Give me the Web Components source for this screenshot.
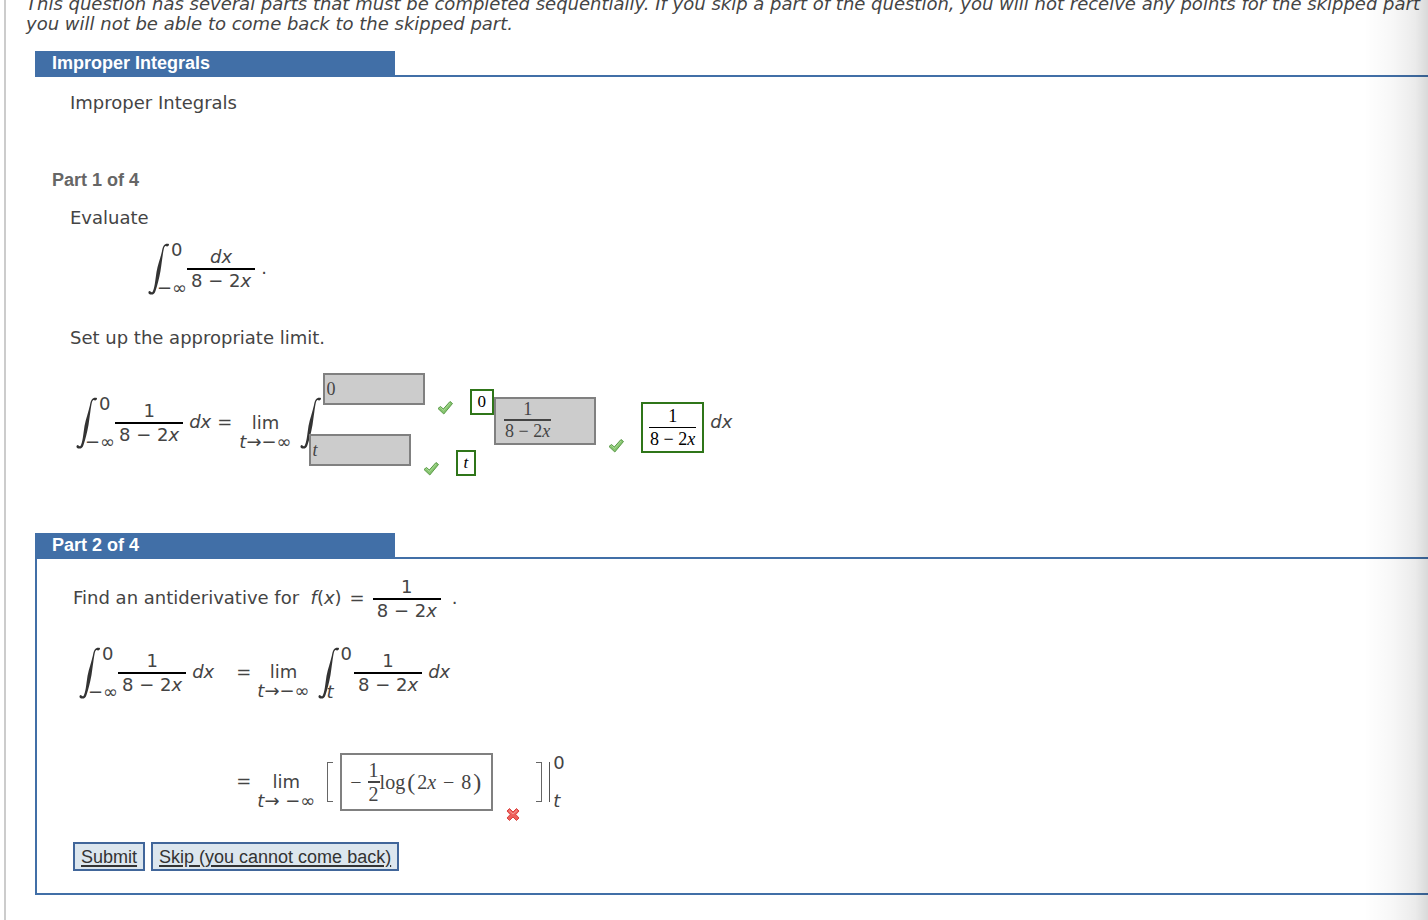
<!DOCTYPE html>
<html lang="en">
<head>
<meta charset="utf-8">
<title>Improper Integrals</title>
<style>
  body { margin: 0; background: #fff; }
</style>
</head>
<body>
<question-page></question-page>

<script>
class MathFrac extends HTMLElement {
  constructor() {
    super();
    this.attachShadow({ mode: 'open' }).innerHTML = `
      <style>
        :host { display: inline-flex; flex-direction: column; text-align: center; white-space: nowrap; line-height: 22px; }
        .num { border-bottom: var(--thick, 2px) solid var(--bar, #000); }
        .num, .den { padding: 0 var(--side, 4px); }
      </style>
      <div class="num"><slot name="num"></slot></div>
      <div class="den"><slot></slot></div>
    `;
  }
}

class MathInt extends HTMLElement {
  constructor() {
    super();
    this.attachShadow({ mode: 'open' }).innerHTML = `
      <style>
        :host { display: inline-flex; align-items: center; line-height: 14px; }
        svg { width: 22px; height: 52px; flex: none; margin-right: 1px; }
        .limits { display: flex; flex-direction: column; justify-content: space-between; gap: 19px; min-height: 52px; }
        .low { margin-left: -14px; }
      </style>
      <svg viewBox="0 0 22 52" aria-hidden="true">
        <path fill="#333" d="M21 1C17 0 15 2 14 8C12.500 15 10 21 8.500 29C7.300 37 6.500 46 4.500 49C3 50 3 48 1.500 48C0 48.500 0 51 2 51.500C5 52 6.500 51 7.500 48C9.500 42 11 36 12.500 28C13.800 20 14.800 10 16 5C17 2.500 18 3 19 3.500C20.500 3.500 21 2.500 21 1Z"/>
      </svg>
      <div class="limits">
        <div><slot name="up"></slot></div>
        <div class="low"><slot></slot></div>
      </div>
    `;
  }
}

class MathLim extends HTMLElement {
  constructor() {
    super();
    this.attachShadow({ mode: 'open' }).innerHTML = `
      <style>
        :host { display: inline-flex; flex-direction: column; align-items: center; line-height: 19px; padding-top: 17px; white-space: nowrap; }
      </style>
      <div>lim</div>
      <div><slot></slot></div>
    `;
  }
}

class MarkIcon extends HTMLElement {
  connectedCallback() {
    const right = `
      <path d="M1 8.500L3.500 6.500L6.300 9L13 1.500L15.500 3.500L6.800 14Z" fill="#86c46f" stroke="#5a9a48" stroke-width="1" stroke-linejoin="round"/>
      <path d="M2.500 8.500L3.700 7.700L6.500 10.500L13 3" fill="none" stroke="#a9dc95"/>`;
    const wrong = `
      <path d="M4.500 1.500L8 5L11.500 1.500L14 4L10.800 7.500L14 11L11.500 13.500L8 10L4.500 13.500L2 11L5.200 7.500L2 4Z" fill="#ee5f5b" stroke="#d84340" stroke-width="1" stroke-linejoin="round"/>
      <path d="M4 3.500L8 7L12 3.500" fill="none" stroke="#f79a95"/>`;
    const ok = this.getAttribute('type') === 'right';
    this.attachShadow({ mode: 'open' }).innerHTML = `
      <style>
        :host { display: inline-block; line-height: 0; }
        svg { width: 16px; height: 15px; }
      </style>
      <svg viewBox="0 0 16 15" role="img" aria-label="${ok ? 'correct' : 'incorrect'}">${ok ? right : wrong}</svg>
    `;
  }
}

// a graded box: the given answer, its mark and the key
class AnswerBox extends HTMLElement {
  connectedCallback() {
    const value = this.getAttribute('value');
    const field = value !== null
      ? `<input class="box" aria-label="${this.getAttribute('label')}" value="${value}" readonly>`
      : `<div class="box math"><slot name="given"></slot></div>`;
    this.attachShadow({ mode: 'open' }).innerHTML = `
      <style>
        :host { display: inline-flex; align-items: flex-end; font-family: "Liberation Serif", "Times New Roman", serif; font-size: 18px; --side: 1px; }
        .box {
          box-sizing: border-box; width: 102px; height: 32px; margin: 0 12px 10px 0; padding: 0 2px;
          border: 2px solid #808080; border-radius: 0; background: #ccc; color: #444; font: inherit; outline: none;
        }
        .box.math { height: 48px; margin-bottom: 8px; padding: 0 8px; --bar: #444; }
        ::slotted([slot="given"]) { line-height: 20px; }
        :host([italic]) .box, :host([italic]) .key { font-style: italic; }
        .key {
          box-sizing: border-box; margin-left: 17px; padding: 0 6px; min-height: 26px;
          border: 2px solid #2f7519; color: #000; font-size: 17px; line-height: 22px; --thick: 1px;
        }
        .math ~ .key { padding: 1px 6px; font-size: 18px; }
      </style>
      ${field}
      <mark-icon type="right"></mark-icon>
      <div class="key"><slot></slot></div>
    `;
  }
}

class PartSection extends HTMLElement {
  constructor() {
    super();
    this.attachShadow({ mode: 'open' }).innerHTML = `
      <style>
        :host { display: block; }
        header { border-bottom: 2px solid #416fa7; }
        h2 {
          box-sizing: border-box; width: 360px; height: 24px; margin: 0; padding-left: 17px;
          background: #416fa7; color: #fff; font: bold 18px/24px "Liberation Sans", Arial, sans-serif;
        }
        .body { padding-left: 35px; }
        :host([framed]) .body { padding: 17px 0 22px 36px; border: solid #416fa7; border-width: 0 0 2px 2px; }
      </style>
      <header><h2><slot name="title"></slot></h2></header>
      <div class="body"><slot></slot></div>
    `;
  }
}

class LinkButton extends HTMLElement {
  constructor() {
    super();
    this.attachShadow({ mode: 'open' }).innerHTML = `
      <style>
        :host { display: inline-block; }
        button {
          height: 29px; padding: 0 6px; border: 2px solid #41669a; border-radius: 0; background: #dce6ee; color: #333;
          font: 18px/24px "Liberation Sans", Arial, sans-serif; text-decoration: underline 2px; text-underline-offset: 2px; cursor: pointer;
        }
      </style>
      <button type="button"><slot></slot></button>
    `;
  }
}

class QuestionPage extends HTMLElement {
  constructor() {
    super();
    this.attachShadow({ mode: 'open' }).innerHTML = `
      <style>
        :host {
          display: block; position: relative; box-sizing: border-box; min-height: 100vh; overflow: hidden;
          margin-left: 4px; border-left: 2px solid #ccc;
          color: #444; font: 18px/20px "DejaVu Sans", Verdana, sans-serif;
        }
        p { margin: 0; }
        .intro { margin: -6px 0 17px 20px; font-style: italic; white-space: nowrap; }
        part-section { margin-left: 29px; }
        h3 { margin: 57px 0 18px -18px; color: #666; font: bold 18px/20px "Liberation Sans", Arial, sans-serif; }
        .row { display: flex; align-items: center; }
        .eq { margin: 0 7px 0 6px; padding-bottom: 2px; }
        .dx { margin-left: 6px; padding-bottom: 2px; }
        .first { margin: 15px 0 33px 78px; }
        .setup { margin: 22px 0 57px 6px; }
        .setup > answer-box, .setup [slot="up"][value] { margin-top: 3px; }
        .find { padding-bottom: 2px; }
        .find-eq { margin: 0 8px; padding-bottom: 2px; }
        .stop { margin-left: 11px; padding-bottom: 2px; }
        .grid { display: grid; grid-template-columns: auto auto 1fr; align-items: center; gap: 53px 6px; margin: 23px 0 31px 6px; }
        .grid .eq { margin: 0 0 0 16px; }
        .after-lim { margin-left: 8px; }
        .narrow { margin-right: 2px; }
        .log {
          display: flex; align-items: center; box-sizing: border-box; height: 58px; padding: 0 8px; margin: 0 12px 0 7px;
          border: 2px solid #808080; font: 20px/22px "Liberation Serif", "Times New Roman", serif; --side: 1px; --bar: #444;
        }
        .log .minus { margin-right: 6px; }
        .log .op { margin: 0 2px; }
        .paren { font-size: 24px; margin: 0 2px; }
        .bracket { box-sizing: border-box; width: 6px; height: 40px; border: 1px solid #666; }
        .open { margin-left: 12px; border-right: 0; }
        .close { margin-left: 15px; border-left: 0; }
        .bar { width: 1px; height: 40px; margin: 0 3px 0 7px; background: #555; }
        .range { display: flex; flex-direction: column; justify-content: space-between; height: 58px; }
        .miss { align-self: flex-end; margin-bottom: -11px; }
        .buttons { display: flex; gap: 6px; }
        .shade {
          position: absolute; top: 0; right: 0; bottom: 0; width: 64px; pointer-events: none;
          background: linear-gradient(to right, transparent, rgba(0,0,0,.03) 45%, rgba(0,0,0,.08) 80%, rgba(0,0,0,.15));
        }
      </style>

      <p class="intro">This question has several parts that must be completed sequentially. If you skip a part of the question, you will not receive any points for the skipped part<br>you will not be able to come back to the skipped part.</p>

      <part-section>
        <span slot="title">Improper Integrals</span>
        <p style="margin-top:16px">Improper Integrals</p>
        <h3>Part 1 of 4</h3>
        <p>Evaluate</p>
        <div class="row first">
          <math-int><span slot="up">0</span>−∞</math-int>
          <math-frac><i slot="num">dx</i>8 − 2<i>x</i></math-frac>
          <span class="dx">.</span>
        </div>
        <p>Set up the appropriate limit.</p>
        <div class="row setup">
          <math-int><span slot="up">0</span>−∞</math-int>
          <math-frac><span slot="num">1</span>8 − 2<i>x</i></math-frac>
          <i class="dx">dx</i><span class="eq">=</span>
          <math-lim><i>t</i>→−∞</math-lim>
          <math-int class="after-lim">
            <answer-box slot="up" value="0" label="Upper limit">0</answer-box>
            <answer-box value="t" label="Lower limit" italic>t</answer-box>
          </math-int>
          <answer-box>
            <math-frac slot="given"><span slot="num">1</span>8 − 2<i>x</i></math-frac>
            <math-frac><span slot="num">1</span>8 − 2<i>x</i></math-frac>
          </answer-box>
          <i class="dx">dx</i>
        </div>
      </part-section>

      <part-section framed>
        <span slot="title">Part 2 of 4</span>
        <div class="row">
          <span class="find">Find an antiderivative for&nbsp; <i>f</i>(<i>x</i>)</span>
          <span class="find-eq">=</span>
          <math-frac><span slot="num">1</span>8 − 2<i>x</i></math-frac>
          <span class="stop">.</span>
        </div>
        <div class="grid">
          <div class="row">
            <math-int><span slot="up">0</span>−∞</math-int>
            <math-frac><span slot="num">1</span>8 − 2<i>x</i></math-frac>
            <i class="dx">dx</i>
          </div>
          <span class="eq">=</span>
          <div class="row">
            <math-lim><i>t</i>→−∞</math-lim>
            <math-int class="after-lim narrow"><span slot="up">0</span><i>t</i></math-int>
            <math-frac><span slot="num">1</span>8 − 2<i>x</i></math-frac>
            <i class="dx">dx</i>
          </div>
          <span></span>
          <span class="eq">=</span>
          <div class="row">
            <math-lim><i>t</i>→ −∞</math-lim>
            <span class="bracket open"></span>
            <div class="log" role="textbox" aria-label="Antiderivative" tabindex="0">
              <span class="minus">−</span>
              <math-frac><span slot="num">1</span>2</math-frac>
              <span>log</span><span class="paren">(</span><span>2<i>x</i> <span class="op">−</span> 8</span><span class="paren">)</span>
            </div>
            <mark-icon class="miss" type="wrong"></mark-icon>
            <span class="bracket close"></span>
            <span class="bar"></span>
            <div class="range"><span>0</span><i>t</i></div>
          </div>
        </div>
        <div class="buttons">
          <link-button>Submit</link-button>
          <link-button>Skip (you cannot come back)</link-button>
        </div>
      </part-section>
      <div class="shade"></div>
    `;
  }
}

customElements.define('math-frac', MathFrac);
customElements.define('math-int', MathInt);
customElements.define('math-lim', MathLim);
customElements.define('mark-icon', MarkIcon);
customElements.define('answer-box', AnswerBox);
customElements.define('part-section', PartSection);
customElements.define('link-button', LinkButton);
customElements.define('question-page', QuestionPage);
</script>
</body>
</html>
